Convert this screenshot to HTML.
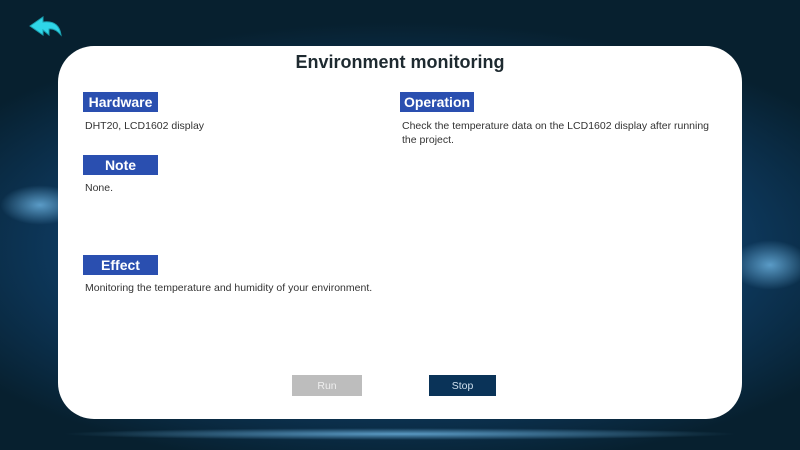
<!DOCTYPE html>
<html><head><style>
body{margin:0;width:800px;height:450px;overflow:hidden;font-family:"Liberation Sans","DejaVu Sans",sans-serif;
background:radial-gradient(ellipse 65% 50% at 50% 55%,#3a95d8 0%,#1a62a0 35%,#0e3a60 62%,#07202f 100%);position:relative}
.streak{position:absolute;background:radial-gradient(ellipse at center,#7cc8f8 0%,rgba(124,200,248,0) 70%);opacity:.7}
.card{position:absolute;left:58px;top:46px;width:684px;height:373px;background:#fff;border-radius:36px}
h1{position:absolute;left:0;right:0;top:52px;margin:0;text-align:center;font-size:18px;font-weight:bold;color:#1e2a30}
.lab{position:absolute;background:#2a4fb0;color:#fff;font-weight:bold;font-size:14px;height:20px;line-height:20px;text-align:center}
.t{position:absolute;font-size:10.5px;color:#333;line-height:14px}
.btn{position:absolute;top:375px;height:21px;line-height:22px;text-align:center;font-size:10.5px}
</style></head><body>
<div class="streak" style="left:0;top:185px;width:80px;height:40px"></div>
<div class="streak" style="left:730px;top:240px;width:80px;height:50px"></div>
<div class="streak" style="left:60px;top:428px;width:680px;height:12px"></div>
<svg style="position:absolute;left:28px;top:14px" width="36" height="26" viewBox="0 0 36 26">
<path d="M2 12 L15 3 L15 8 Q31 6 33 21 Q27 14 21 15 L21 21 L15 16 L15 21 Z" fill="#2fd6e8" stroke="#1aa0b0" stroke-width="1"/></svg>
<div class="card"></div>
<h1>Environment monitoring</h1>
<div class="lab" style="left:83px;top:92px;width:75px">Hardware</div>
<div class="t" style="left:85px;top:119px">DHT20, LCD1602 display</div>
<div class="lab" style="left:83px;top:155px;width:75px">Note</div>
<div class="t" style="left:85px;top:181px">None.</div>
<div class="lab" style="left:83px;top:255px;width:75px">Effect</div>
<div class="t" style="left:85px;top:281px">Monitoring the temperature and humidity of your environment.</div>
<div class="lab" style="left:400px;top:92px;width:74px">Operation</div>
<div class="t" style="left:402px;top:119px;width:310px">Check the temperature data on the LCD1602 display after running the project.</div>
<div class="btn" style="left:292px;width:70px;background:#bdbdbd;color:#eee">Run</div>
<div class="btn" style="left:429px;width:67px;background:#0a3358;color:#cfe0ee">Stop</div>
</body></html>
